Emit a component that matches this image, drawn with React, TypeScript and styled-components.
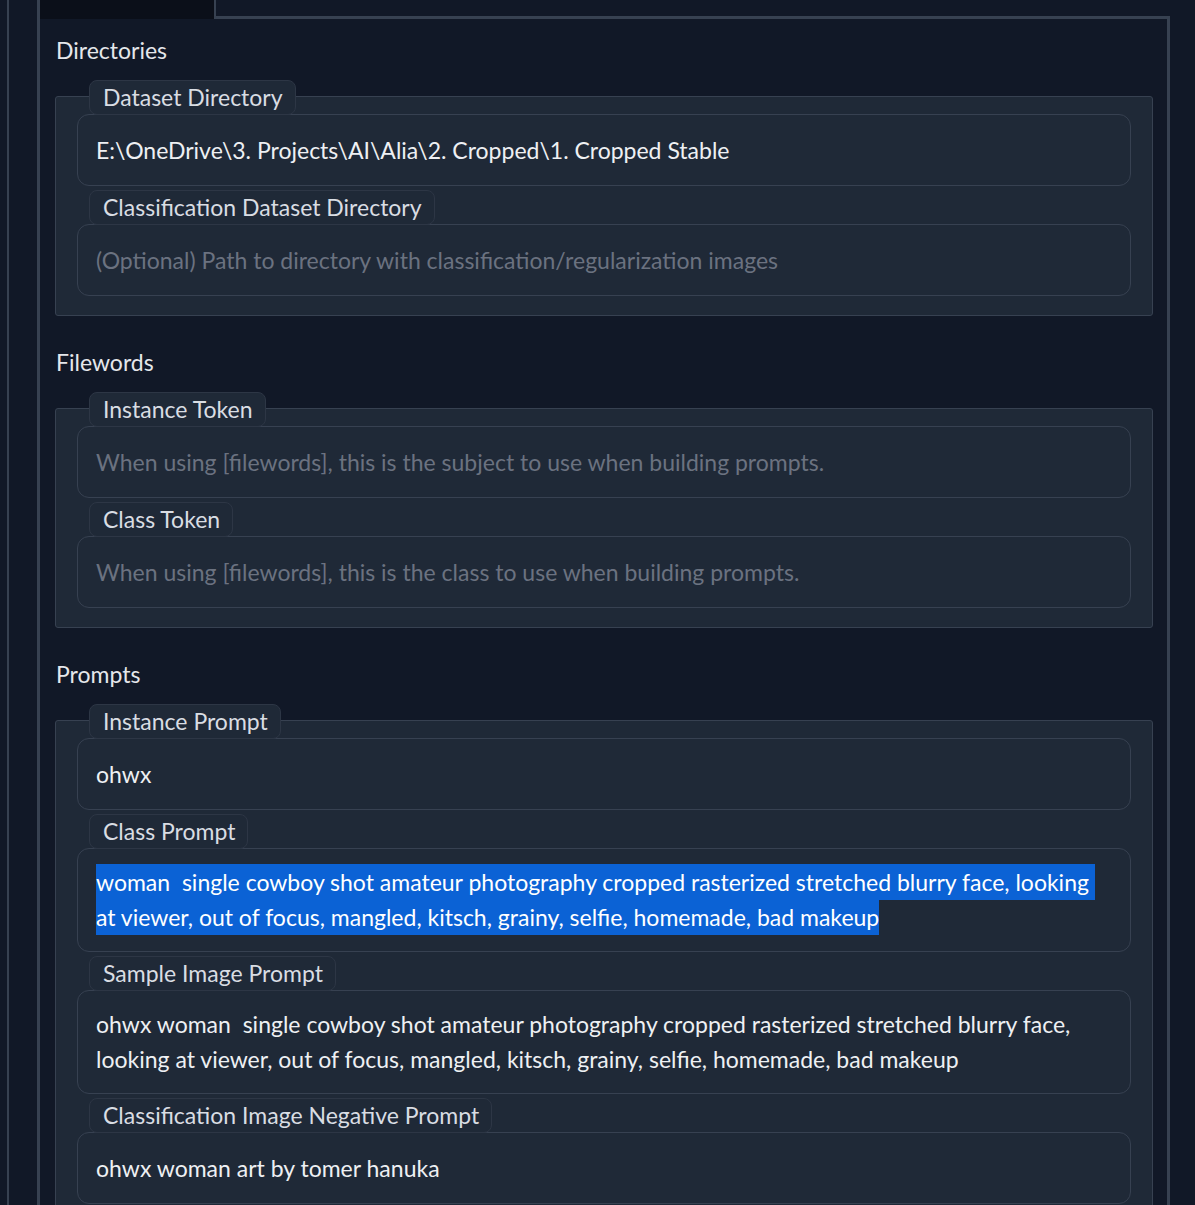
import React from "react";
import styled, { createGlobalStyle } from "styled-components";

type FieldT = {
    label: string;
    value?: string;
    placeholder?: string;
    selected?: boolean;
};

type SectionT = {
    title: string;
    fields: FieldT[];
};

const tabs = ["Concept 1", "Concept 2", "Concept 3", "Concept 4"];

const sections: SectionT[] = [
    {
        title: "Directories",
        fields: [
            { label: "Dataset Directory", value: "E:\\OneDrive\\3. Projects\\AI\\Alia\\2. Cropped\\1. Cropped Stable" },
            { label: "Classification Dataset Directory", placeholder: "(Optional) Path to directory with classification/regularization images" }
        ]
    },
    {
        title: "Filewords",
        fields: [
            { label: "Instance Token", placeholder: "When using [filewords], this is the subject to use when building prompts." },
            { label: "Class Token", placeholder: "When using [filewords], this is the class to use when building prompts." }
        ]
    },
    {
        title: "Prompts",
        fields: [
            { label: "Instance Prompt", value: "ohwx" },
            {
                label: "Class Prompt",
                value: "woman  single cowboy shot amateur photography cropped rasterized stretched blurry face, looking at viewer, out of focus, mangled, kitsch, grainy, selfie, homemade, bad makeup",
                selected: true
            },
            {
                label: "Sample Image Prompt",
                value: "ohwx woman  single cowboy shot amateur photography cropped rasterized stretched blurry face, looking at viewer, out of focus, mangled, kitsch, grainy, selfie, homemade, bad makeup"
            },
            { label: "Classification Image Negative Prompt", value: "ohwx woman art by tomer hanuka" },
            { label: "Sample Image Negative Prompt", placeholder: "" }
        ]
    }
];

export default function App() {
    return (
        <>
            <GlobalStyle />
            <Page>
                <Frame>
                    <TabBar>
                        {tabs.map((t, i) => (
                            <TabButton key={t} $active={i === 0}>{t}</TabButton>
                        ))}
                    </TabBar>
                    <TabPanel>
                        {sections.map((s) => (
                            <Section key={s.title}>
                                <Heading>{s.title}</Heading>
                                <Group>
                                    {s.fields.map((f) => (
                                        <Field key={f.label}>
                                            <LabelPill>{f.label}</LabelPill>
                                            <TextBox role="textbox" $empty={!f.value}>
                                                <BoxText>
                                                    {f.value
                                                        ? f.selected
                                                            ? <Selected>{f.value}</Selected>
                                                            : f.value
                                                        : f.placeholder}
                                                </BoxText>
                                            </TextBox>
                                        </Field>
                                    ))}
                                </Group>
                            </Section>
                        ))}
                    </TabPanel>
                </Frame>
            </Page>
        </>
    );
}

// styles

const GlobalStyle = createGlobalStyle`
    html, body {
        margin: 0;
        padding: 0;
        background: #111827;
    }
    body {
        font-family: Lato, "Liberation Sans", sans-serif;
        overflow: hidden;
    }
`;
const Page = styled.div`
    padding-left: 7px;
    margin-top: -40px;
`;
const Frame = styled.div`
    border-left: 2px solid #374151;
    padding-left: 28px;
    min-height: 1400px;
`;
const TabBar = styled.div`
    display: flex;
    height: 56px;
`;
const TabButton = styled.div<{ $active: boolean }>`
    position: relative;
    z-index: 1;
    box-sizing: border-box;
    width: ${(p) => (p.$active ? "179px" : "178px")};
    height: ${(p) => (p.$active ? "59px" : "56px")};
    display: flex;
    align-items: flex-end;
    justify-content: center;
    padding-bottom: ${(p) => (p.$active ? "17px" : "14px")};
    font-size: 23px;
    line-height: 35px;
    color: ${(p) => (p.$active ? "#e5e7eb" : "#9ca3af")};
    background: ${(p) => (p.$active ? "#0b0f19" : "transparent")};
    border: ${(p) => (p.$active ? "3px solid #374151" : "none")};
    border-right-width: 2px;
    border-bottom: none;
`;
const TabPanel = styled.div`
    box-sizing: border-box;
    width: 1133px;
    border: 3px solid #374151;
    padding: 14px 14px 40px 15px;
    display: flex;
    flex-direction: column;
    gap: 29px;
`;
const Section = styled.section`
    display: flex;
    flex-direction: column;
`;
const Heading = styled.div`
    font-size: 23px;
    line-height: 35px;
    color: #e5e7eb;
    padding-left: 1px;
`;
const Group = styled.div`
    margin-top: 28px;
    background: #1f2937;
    border: 1px solid #374151;
    border-radius: 3px;
    padding: 0 21px 19px;
    display: flex;
    flex-direction: column;
    gap: 4px;

    & > div:first-child {
        margin-top: -17px;
    }
`;
const Field = styled.div`
    display: flex;
    flex-direction: column;
    align-items: flex-start;
`;
const LabelPill = styled.span`
    position: relative;
    z-index: 1;
    margin: 0 0 -1px 12px;
    padding: 0 12px 0 13px;
    line-height: 33px;
    font-size: 23px;
    color: #d9dde3;
    background: #1f2937;
    border: 1px solid #2d3645;
    border-radius: 8px;
`;
const TextBox = styled.div<{ $empty: boolean }>`
    box-sizing: border-box;
    width: 100%;
    min-height: 72px;
    display: flex;
    align-items: center;
    padding: 16px 18px;
    background: #1f2937;
    border: 1px solid #374151;
    border-radius: 12px;
    color: ${(p) => (p.$empty ? "#6b7280" : "#eef0f3")};
`;
const BoxText = styled.div`
    font-size: 23px;
    line-height: 35px;
    white-space: pre-wrap;
`;
const Selected = styled.span`
    background: #0b62d5;
    color: #ffffff;
    padding: 4px 0;
`;
